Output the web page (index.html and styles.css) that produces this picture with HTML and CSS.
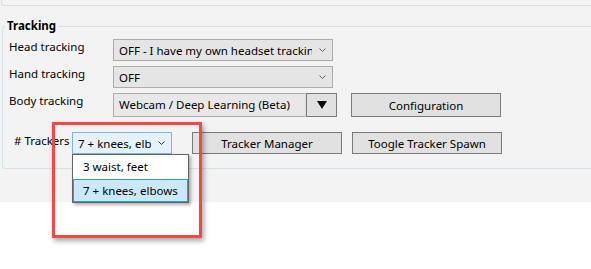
FILE: index.html
```html
<!DOCTYPE html>
<html lang="en">
<head>
    <meta charset="UTF-8">
    <meta name="viewport" content="width=device-width, initial-scale=1.0">
    <title>Tracking settings</title>
    <link rel="stylesheet" href="styles.css">
</head>
<body>
    <div class="page">
        <div class="window">
            <!-- bottom edge of the group above -->
            <div class="prev-group"></div>

            <fieldset class="group">
                <legend>Tracking</legend>

                <div class="row">
                    <span class="row-label">Head tracking</span>
                    <div class="combo combo-wide">
                        <span class="combo-text">OFF - I have my own headset tracking</span>
                        <span class="chevron"><svg width="7" height="4" viewBox="0 0 7 4"><path d="M0.5 0.5 L3.5 3.5 L6.5 0.5" fill="none" stroke="#606060" stroke-width="1"/></svg></span>
                    </div>
                </div>

                <div class="row">
                    <span class="row-label">Hand tracking</span>
                    <div class="combo combo-wide">
                        <span class="combo-text">OFF</span>
                        <span class="chevron"><svg width="7" height="4" viewBox="0 0 7 4"><path d="M0.5 0.5 L3.5 3.5 L6.5 0.5" fill="none" stroke="#606060" stroke-width="1"/></svg></span>
                    </div>
                </div>

                <div class="row row-body">
                    <span class="row-label">Body tracking</span>
                    <div class="textbox">Webcam / Deep Learning (Beta)</div>
                    <button class="btn btn-arrow" type="button"><svg width="10" height="8" viewBox="0 0 10 8"><polygon points="0,0 10,0 5,8" fill="#000"/></svg></button>
                    <button class="btn btn-config" type="button">Configuration</button>
                </div>

                <div class="row row-trackers">
                    <span class="row-label">#&nbsp;Trackers</span>
                    <div class="combo combo-small is-open">
                        <span class="combo-text">7 + knees, elbows</span>
                        <span class="chevron"><svg width="7" height="4" viewBox="0 0 7 4"><path d="M0.5 0.5 L3.5 3.5 L6.5 0.5" fill="none" stroke="#333" stroke-width="1"/></svg></span>

                        <ul class="dropdown-list">
                            <li>3 waist, feet</li>
                            <li class="selected">7 + knees, elbows</li>
                        </ul>
                    </div>
                    <button class="btn btn-manager" type="button">Tracker Manager</button>
                    <button class="btn btn-spawn" type="button">Toogle Tracker Spawn</button>
                </div>
            </fieldset>
        </div>

        <!-- red highlight drawn over the screenshot -->
        <div class="callout"></div>
    </div>
</body>
</html>
```

FILE: styles.css
```css
html, body {
    margin: 0;
    min-height: 269px;
    background: #ffffff;
}
body {
    font-family: 'Segoe UI', 'Noto Sans', sans-serif;
    font-size: 11.5px;
    color: #000000;
}
.page {
    position: relative;
    min-height: 269px;
}
.window {
    height: 202px;
    background: #f3f3f3;
}
.prev-group {
    height: 5px;
    margin-left: 1px;
    border-left: 1px solid #d5dfe5;
    border-bottom: 1px solid #d5dfe5;
    border-bottom-left-radius: 3px;
}
.group {
    margin: 12px 0 0 2px;
    padding: 5px 0 14px 0;
    min-width: 0;
    border: 1px solid #d5dfe5;
    border-right: none;
    border-radius: 3px 0 0 3px;
}
.group legend {
    margin-left: 2px;
    padding: 0 2px;
    font-weight: bold;
    line-height: 16px;
}
.row {
    display: flex;
    align-items: flex-start;
    height: 22px;
    margin-bottom: 5px;
    padding-left: 6px;
}
.row-label {
    width: 104px;
    line-height: 16px;
    white-space: nowrap;
}
.combo {
    position: relative;
    display: flex;
    align-items: center;
    box-sizing: border-box;
    height: 22px;
    padding-left: 5px;
    background: #e5e5e5;
    border: 1px solid #acacac;
}
.combo-text {
    flex: 1;
    overflow: hidden;
    white-space: nowrap;
}
.chevron {
    display: flex;
    justify-content: center;
    width: 20px;
    flex: none;
}
.combo-wide {
    width: 220px;
}
.row-body {
    height: 24px;
    margin-bottom: 15px;
}
.textbox {
    box-sizing: border-box;
    width: 193px;
    height: 24px;
    padding: 0 5px;
    line-height: 22px;
    background: #e8e8e8;
    border: 1px solid #acacac;
    border-right-color: #dcdcdc;
    white-space: nowrap;
    overflow: hidden;
}
.btn {
    box-sizing: border-box;
    height: 24px;
    padding: 0;
    font-family: inherit;
    font-size: 11.5px;
    color: #000000;
    background: #e1e1e1;
    border: 1px solid #7a7a7a;
}
.btn-arrow {
    display: flex;
    align-items: center;
    justify-content: center;
    width: 31px;
}
.btn-config {
    width: 150px;
    margin-left: 14px;
}
.row-trackers {
    height: 22px;
    margin-bottom: 0;
    padding-left: 11px;
}
.row-trackers .row-label {
    width: 58px;
    padding-top: 1px;
}
.combo-small {
    width: 100px;
    height: 22px;
}
.combo.is-open {
    background: #e5f1fb;
    border-color: #7eb4ea;
}
.row-trackers .btn {
    width: 150px;
    height: 22px;
}
.btn-manager {
    margin-left: 20px;
}
.btn-spawn {
    margin-left: 10px;
}
.dropdown-list {
    position: absolute;
    top: 21px;
    left: -1px;
    z-index: 2;
    width: 117px;
    margin: 0;
    padding: 0;
    list-style: none;
    box-sizing: border-box;
    background: #ffffff;
    border: 1px solid #646464;
    box-shadow: 2px 2px 3px rgba(0, 0, 0, 0.3);
}
.dropdown-list li {
    height: 24px;
    padding-left: 10px;
    line-height: 24px;
    white-space: nowrap;
}
.dropdown-list li.selected {
    height: 23px;
    box-sizing: border-box;
    padding-left: 9px;
    line-height: 21px;
    background: #cce8ff;
    border: 1px solid #26a0da;
}
.callout {
    position: absolute;
    left: 52px;
    top: 122px;
    z-index: 3;
    width: 150px;
    height: 116px;
    box-sizing: border-box;
    border: 3px solid #f44848;
    box-shadow: 2px 3px 5px rgba(0, 0, 0, 0.35);
}
```
